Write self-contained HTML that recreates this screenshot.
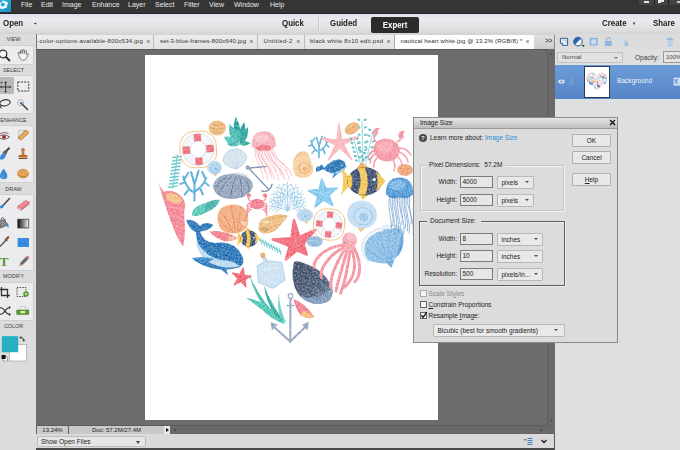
<!DOCTYPE html>
<html>
<head>
<meta charset="utf-8">
<title>Editor</title>
<style>
html,body{margin:0;padding:0;}
body{width:680px;height:450px;overflow:hidden;background:#dedede;font-family:"Liberation Sans","DejaVu Sans",sans-serif;position:relative;}
.abs{position:absolute;}
#menubar{left:0;top:0;width:680px;height:14px;background:#353535;box-shadow:inset 0 -0.5px 0 #111;}
#menubar span{position:absolute;top:0;line-height:9px;font-size:7px;color:#e8e8e8;white-space:nowrap;}
#logo{left:0;top:0;width:11px;height:11.5px;background:#1e9ac8;}
#modebar{left:0;top:14px;width:680px;height:21px;background:linear-gradient(#dde1ec 0%,#e9eaf0 25%,#e4e4e6 60%,#d2d2d3 100%);}
#modebar span{position:absolute;font-weight:bold;font-size:9px;color:#222;line-height:20px;top:-0.6px;white-space:nowrap;transform:scaleX(0.875);transform-origin:0 50%;}
#expert{left:370.5px;top:16.6px;width:48.3px;height:16.4px;background:#2b2b2b;border-radius:2px;color:#fff;font-weight:bold;font-size:9px;line-height:16px;text-align:center;}
#tools{left:0;top:34px;width:36px;height:416px;background:#dcdcdc;}
.tl{position:absolute;left:0;width:27px;height:11px;line-height:11px;font-size:5.4px;color:#3c3c3c;text-align:center;white-space:nowrap;}
.tg{position:absolute;left:0;width:33px;background:#ececee;border:1px solid #d0d0d0;border-left:none;}
#tabbar{left:36px;top:35px;width:519px;height:14px;background:linear-gradient(#ececec,#e2e2e2);}
.tab{position:absolute;top:0;height:14px;line-height:12px;font-size:6px;color:#333;white-space:nowrap;border-right:1px solid #bbb;}
#canvas{left:36px;top:49px;width:519px;height:385px;background:#6c6c6c;}
#doc{left:145px;top:55px;width:293px;height:365px;background:#fff;overflow:hidden;}
#status{left:36px;top:423px;width:519px;height:10px;background:#6b6b6b;}
#bottom{left:36px;top:433px;width:519px;height:17px;background:#d8d8d8;}
#right{left:555px;top:34px;width:125px;height:416px;background:#dedfe0;}
#dialog{left:413px;top:117px;width:203px;height:224px;background:#dcdcdc;border:1px solid #8a8a8a;}
.dt{position:absolute;font-size:6.5px;color:#222;white-space:nowrap;line-height:10px;}
.inp{position:absolute;width:29px;height:10px;border:1px solid #7c7c7c;background:#e6e6e6;font-size:6.5px;line-height:10px;color:#222;padding-left:2px;}
.sel{position:absolute;height:11px;border:1px solid #b8b8b8;background:#e9e9e9;font-size:6.5px;line-height:11px;color:#222;padding-left:4px;border-radius:1px;}
.sel i{position:absolute;right:4px;top:4.2px;width:0;height:0;border-left:2.7px solid transparent;border-right:2.7px solid transparent;border-top:2.8px solid #4c4c4c;}
.btn{position:absolute;margin-left:-1.3px;width:36.6px;height:11px;border:1px solid #b0b0b0;background:#e8e8e8;font-size:6.5px;line-height:11px;text-align:center;color:#222;border-radius:1px;}
.cb{position:absolute;width:5px;height:5px;border:1px solid #666;background:#f4f4f4;}
</style>
</head>
<body>
<div id="menubar" class="abs">
<div id="logo" class="abs" style="overflow:hidden;background:linear-gradient(135deg,#2eaee0,#1592c0)"><svg class="abs" style="left:0;top:0" width="11" height="12" viewBox="0 0 11 12"><path d="M3.2 0.4 L8 2.6 L6.6 7.8 L1.2 9.2 L-2.4 5.4 Z" fill="#eef8fc"/><circle cx="2.8" cy="4.5" r="2.1" fill="#3cb4e0"/><circle cx="2.8" cy="4.5" r="1" fill="#1a9bc8"/></svg></div>
<span style="left:21px">File</span>
<span style="left:41px">Edit</span>
<span style="left:62px">Image</span>
<span style="left:92px">Enhance</span>
<span style="left:128px">Layer</span>
<span style="left:155px">Select</span>
<span style="left:184px">Filter</span>
<span style="left:209px">View</span>
<span style="left:234px">Window</span>
<span style="left:270px">Help</span>
<div class="abs" style="left:639px;top:0;width:41px;height:5px;background:#444;border-radius:0 0 0 2px;">
<div class="abs" style="left:15px;top:0;width:1px;height:5px;background:#1c1c1c"></div><div class="abs" style="left:29px;top:0;width:1px;height:5px;background:#1c1c1c"></div>
<div class="abs" style="left:5px;top:1px;width:5px;height:1.5px;background:#e6e6e6"></div>
<div class="abs" style="left:19px;top:0;width:3px;height:2.5px;background:#e6e6e6"></div><div class="abs" style="left:22px;top:0;width:3px;height:1.5px;border:0.5px solid #e6e6e6;box-sizing:border-box"></div>
<div class="abs" style="left:38px;top:1px;width:3px;height:1.5px;background:#c8c8c8"></div>
</div>
</div>
<div id="modebar" class="abs">
<span style="left:3px">Open</span>
<span style="left:34px">-</span>
<span style="left:282px">Quick</span>
<span style="left:330px">Guided</span>
<div class="abs" style="left:318px;top:3px;width:1px;height:14px;background:#c4c4c8;box-shadow:1px 0 0 #f2f2f4;"></div>
<span style="left:602px">Create</span>
<span style="left:632.5px;font-size:5px">▾</span>
<span style="left:653px">Share</span>
</div>
<div id="expert" class="abs"><span style="display:inline-block;transform:scaleX(0.875);">Expert</span></div>
<div id="tabbar" class="abs">
<div class="tab" style="left:1.3px;width:115.7px;letter-spacing:0.25px">-color-options-available-800x534.jpg &nbsp;x</div>
<div class="tab" style="left:118px;width:97px;padding-left:6px;letter-spacing:0.155px">set-3-blue-frames-800x640.jpg &nbsp;x</div>
<div class="tab" style="left:222px;width:40px;padding-left:5.5px;letter-spacing:0.35px">Untitled-2 &nbsp;x</div>
<div class="tab" style="left:268px;width:83.5px;padding-left:6px;letter-spacing:0.25px">black white 8x10 edit.psd &nbsp;x</div>
<div class="tab" style="left:358px;width:133.5px;padding-left:5.6px;background:#fdfdfd;letter-spacing:0.15px;border-left:1px solid #aaa;border-right:1px solid #aaa;">nautical heart white.jpg @ 13.2% (RGB/8) * &nbsp;x</div>
<div class="tab" style="left:498px;width:20px;border:none;background:linear-gradient(#e0e0e0,#cccccc);"></div><div class="tab" style="left:508.5px;border:none;font-size:7.5px;letter-spacing:-0.6px;color:#555;font-weight:bold;transform:scaleX(0.9);transform-origin:0 50%">&gt;&gt;</div>
</div>
<div class="abs" style="left:36px;top:34px;width:1px;height:416px;background:#7a7a7a;"></div>
<div id="canvas" class="abs"></div>
<div class="abs" style="left:547px;top:49px;width:8px;height:385px;background:#696969;border-left:1px solid #5c5c5c;box-sizing:border-box;"></div>
<div class="abs" style="left:549px;top:52px;font-size:4px;color:#444;line-height:4px;">▲</div>
<div class="abs" style="left:549px;top:419px;font-size:4px;color:#444;line-height:4px;">▼</div>
<div id="doc" class="abs">
<!--HS--><svg class="abs" style="left:0;top:0" width="293" height="365" viewBox="145 55 293 365">
<defs><filter id="bl" x="-2%" y="-2%" width="104%" height="104%"><feGaussianBlur stdDeviation="0.4" result="b"/><feTurbulence type="fractalNoise" baseFrequency="0.55" numOctaves="2" seed="4" result="n"/><feColorMatrix in="n" type="matrix" values="0 0 0 0 0  0 0 0 0 0  0 0 0 0 0  0.9 0 0 0 0.42" result="a"/><feComposite in="b" in2="a" operator="in"/></filter><linearGradient id="mg" x1="0.1" y1="0" x2="0.9" y2="1"><stop offset="0" stop-color="#36465f"/><stop offset="0.55" stop-color="#44566f"/><stop offset="1" stop-color="#6f8cae"/></linearGradient></defs>
<g id="hg" filter="url(#bl)">
<path d="M177.5 154 Q175.5 172 172.5 189" stroke="#4cb4be" stroke-width="0.9" fill="none"/><path d="M173.0 157.6 L181.4 156.4 M172.6 160.9 L180.9 159.7 M172.1 164.2 L180.5 163.0 M171.7 167.5 L180.0 166.3 M171.2 170.8 L179.6 169.6 M170.8 174.1 L179.1 172.9 M170.3 177.4 L178.7 176.2 M169.8 180.7 L178.2 179.5 M169.4 184.0 L177.8 182.8 M168.9 187.3 L177.3 186.1" stroke="#5cc2ca" stroke-width="1.5" fill="none" stroke-linecap="round"/>
<g><rect x="180.0" y="131.2" width="36.4" height="36.4" rx="14.6" fill="none" stroke="#f0b46a" stroke-width="0.9" transform="rotate(-4 198.2 149.4)"/>
<circle cx="198.2" cy="149.4" r="12.00" fill="none" stroke="#f4f5f9" stroke-width="8.00"/>
<rect x="194.52" y="133.65" width="7.36" height="7.60" rx="0.6" fill="#f06472" transform="rotate(-4 198.2 149.4)"/><rect x="194.52" y="133.65" width="7.36" height="7.60" rx="0.6" fill="#f06472" transform="rotate(86 198.2 149.4)"/><rect x="194.52" y="133.65" width="7.36" height="7.60" rx="0.6" fill="#f06472" transform="rotate(176 198.2 149.4)"/><rect x="194.52" y="133.65" width="7.36" height="7.60" rx="0.6" fill="#f06472" transform="rotate(266 198.2 149.4)"/>
<circle cx="198.2" cy="149.4" r="16" fill="none" stroke="#c4c8d4" stroke-width="0.6"/><circle cx="198.2" cy="149.4" r="8.0" fill="none" stroke="#c4c8d4" stroke-width="0.6"/></g>
<ellipse cx="217.3" cy="128" rx="8.7" ry="7.4" fill="#ebb878"/><path d="M212 124q5 3 11 0M211 128q6 3 13 0M213 132q4 2 9 0" stroke="#c98a48" stroke-width="0.6" fill="none"/>
<path d="M238.4 144.2 Q244.0 131.1 235.6 116.5 Q230.4 132.4 238.4 144.2Z" fill="#1f9c94"/><path d="M240.5 144.2 Q248.3 135.3 244.2 122.1 Q236.0 133.2 240.5 144.2Z" fill="#1f9c94"/><path d="M242.0 144.2 Q249.6 138.2 247.8 127.1 Q239.6 134.8 242.0 144.2Z" fill="#23a29a"/><path d="M236.9 144.2 Q240.3 132.7 229.6 124.0 Q226.9 137.5 236.9 144.2Z" fill="#3fbab0"/><path d="M236.9 144.5 Q234.6 135.2 224.0 136.7 Q227.5 146.9 236.9 144.5Z" fill="#4cc4b8"/><path d="M239.2 145.1 Q234.0 140.6 226.8 143.9 Q233.2 148.6 239.2 145.1Z" fill="#38b0a6"/><path d="M238.4 143.9 Q244.4 147.8 251.0 143.0 Q243.8 139.1 238.4 143.9Z" fill="#2aa69c"/><path d="M238.0 144.2 Q243.2 137.2 238.4 128.4 Q233.2 136.9 238.0 144.2Z" fill="#37b2a8"/>
<path d="M251.8 146.335 Q251.20000000000002 131.3 263.8 131.3 Q276.40000000000003 131.3 275.8 146.335 Q269.8 151.67 263.8 148.76 Q257.8 151.67 251.8 146.335Z" fill="#f5aab3"/><ellipse cx="262.0" cy="138.09" rx="7.199999999999999" ry="4.365" fill="#fad4d8" opacity="0.55"/><path d="M254.8 146.8 q-0.6 9.7 4.2 17.8 t4.2 14.6 M256.2 146.8 q-0.6 7.9 4.6 14.4 t4.6 11.8 M257.6 146.8 q-0.5 10.2 5.0 18.7 t5.0 15.3 M259.0 146.8 q-0.4 8.4 5.4 15.4 t5.4 12.6 M260.3 146.8 q-0.3 9.4 5.8 17.2 t5.8 14.1 M261.7 146.8 q-0.3 9.8 6.2 18.0 t6.2 14.7 M263.1 146.8 q-0.2 7.6 6.6 14.0 t6.6 11.5 M264.5 146.8 q-0.1 10.2 7.0 18.6 t7.0 15.2 M265.9 146.8 q-0.0 8.6 7.4 15.7 t7.4 12.9 M267.3 146.8 q0.1 9.2 7.8 16.9 t7.8 13.8 M268.6 146.8 q0.1 9.9 8.2 18.2 t8.2 14.9 M270.0 146.8 q0.2 7.4 8.6 13.6 t8.6 11.1 M271.4 146.8 q0.3 10.1 9.0 18.5 t9.0 15.2 M272.8 146.8 q0.4 8.8 9.4 16.1 t9.4 13.2" stroke="#ee6f7e" stroke-width="0.6" fill="none" opacity="0.7"/>
<path d="M256 148 Q264 141 272 148 Q270 152 264 150.5 Q258 152 256 148Z" fill="#f0687a" opacity="0.85"/>
<g transform="rotate(-10 235 159.3)"><path d="M235 169.3 Q219.4 162.3 224.2 155.3 Q229.0 148.3 235 149.3 Q241.0 148.3 245.8 155.3 Q250.6 162.3 235 169.3Z" fill="#d6e4f0" stroke="#a9c3d9" stroke-width="0.8"/><path d="M235 168.3 L225.1 155.3 M235 168.3 L227.7 152.6 M235 168.3 L231.1 150.9 M235 168.3 L235.0 150.3 M235 168.3 L238.9 150.9 M235 168.3 L242.3 152.6 M235 168.3 L244.9 155.3" stroke="#a9c3d9" stroke-width="0.5" opacity="0.6" fill="none"/></g>
<g transform="rotate(5 214.5 167.6)"><path d="M210.0 169.7 L216.0 176.35 L219.0 171.79999999999998Z" fill="#eebc66"/><ellipse cx="214.5" cy="167.6" rx="7.5" ry="7" fill="#b9d8ee"/><ellipse cx="215.25" cy="168.29999999999998" rx="4.65" ry="4.34" fill="none" stroke="#7fb3d8" stroke-width="0.9"/><ellipse cx="215.625" cy="168.65" rx="2.1" ry="1.9600000000000002" fill="#7fb3d8" opacity="0.8"/></g>
<path d="M213 186 Q216 173 234 174 Q252 175 253 186 Q250 198 233 199 Q215 199 213 186Z" fill="#8d9fb8"/><path d="M232 176 Q222 184 219 195M236 176 Q232 186 230 198M240 177 Q242 187 242 197M245 179 Q250 186 249 192M227 177Q217 182 215 190" stroke="#5f7290" stroke-width="1" fill="none"/><path d="M230 174 Q240 172 247 176" stroke="#c0ccdc" stroke-width="1.2" fill="none"/>
<g stroke="#7489a8" stroke-width="1.4" fill="none" stroke-linecap="round"><path d="M248.8 168.3 L268 188.6"/><path d="M246.5 168.3 L266 166.6"/><path d="M261.5 191 Q269.5 193 272 184.5"/><circle cx="247.6" cy="167.6" r="1.3"/></g>
<path d="M194.5 200.5 L194.5 182.5 M194.5 193.0 Q186.1 188.5 183.3 176.5 M194.5 191.5 Q202.9 187.0 206.26 178.0 M194.5 184.0 L191.14 172.0 M194.5 184.0 L198.7 170.5 M184.42 182.5 L180.5 184.0 M183.86 179.5 L188.34 172.9 M205.14 182.5 L208.5 185.5 M205.7 179.5 L202.34 172.0 M200.1 188.5 L202.9 194.5 M188.9 189.4 L184.7 194.5" stroke="#4fa8d8" stroke-width="2.1" stroke-linecap="round" fill="none"/>
<path d="M158.5 182.8 Q160.4 188.5 164.2 191.7 Q168.0 189.8 172.7 191.3 Q183.1 194.2 185.3 204.6 Q183.3 212.1 184.4 218.8 Q185.9 232.9 183.3 246.5 Q178.4 240.5 174.6 231.0 Q166.1 210.2 158.5 182.8Z" fill="#f27c8c"/><ellipse cx="173.6" cy="198.3" rx="8.5" ry="4.6" fill="#f3bd80" transform="rotate(22 173.6 198.3)"/><path d="M166.1 206.5 Q174.6 206.5 184.6 211.2 M168.9 215.9 Q176.5 215.9 184.2 220.6 M172.3 225.4 Q178.4 225.4 184.8 229.5 M176.1 234.8 Q180.2 234.8 184.2 237.7" stroke="#f7a5b0" stroke-width="1" fill="none"/>
<path d="M192.0 215.0 Q192.5 206.5 204.8 203.6 Q212.4 198.9 219.9 199.8 Q217.1 208.4 206.7 212.1 Q197.3 217.8 192.0 215.0Z" fill="#3caea4"/><path d="M192.0 215.0 Q192.5 206.5 204.8 203.6 Q206.7 208.4 203.9 213.1 Q197.3 217.4 192.0 215.0Z" fill="#4fc8b0"/>
<path d="M287.5 210.8 Q283.1 208.2 268.8 205.5 M281.5 208.4 L276.9 210.6 M276.9 210.6 l-1.5 2.0 M281.5 208.4 L278.6 204.3 M278.6 204.3 l-0.3 -2.5 M278.2 207.5 L274.1 209.5 M274.1 209.5 l-1.3 1.8 M278.2 207.5 L275.6 203.8 M275.6 203.8 l-0.2 -2.3 M274.1 206.6 L270.4 208.3 M270.4 208.3 l-1.2 1.6 M274.1 206.6 L271.8 203.3 M271.8 203.3 l-0.2 -2.0 M287.5 210.8 Q283.3 204.5 269.7 198.3 M281.8 205.2 L276.8 205.7 M276.8 205.7 l-2.1 1.4 M281.8 205.2 L280.4 200.3 M280.4 200.3 l0.5 -2.5 M278.7 203.0 L274.1 203.5 M274.1 203.5 l-1.9 1.3 M278.7 203.0 L277.4 198.7 M277.4 198.7 l0.5 -2.2 M274.7 200.8 L270.7 201.2 M270.7 201.2 l-1.7 1.2 M274.7 200.8 L273.6 196.9 M273.6 196.9 l0.4 -2.0 M287.5 210.8 Q284.0 200.7 272.8 190.6 M282.8 201.7 L277.9 200.6 M277.9 200.6 l-2.4 0.7 M282.8 201.7 L283.0 196.7 M283.0 196.7 l1.3 -2.2 M280.2 198.3 L275.8 197.3 M275.8 197.3 l-2.2 0.6 M280.2 198.3 L280.4 193.7 M280.4 193.7 l1.2 -1.9 M277.0 194.6 L273.0 193.8 M273.0 193.8 l-1.9 0.6 M277.0 194.6 L277.1 190.6 M277.1 190.6 l1.0 -1.7 M287.5 210.8 Q285.5 197.6 279.0 184.4 M284.8 198.9 L280.5 196.3 M280.5 196.3 l-2.5 -0.1 M284.8 198.9 L286.6 194.2 M286.6 194.2 l1.9 -1.6 M283.3 194.4 L279.4 192.1 M279.4 192.1 l-2.3 -0.1 M283.3 194.4 L284.9 190.2 M284.9 190.2 l1.7 -1.5 M281.4 189.7 L278.0 187.6 M278.0 187.6 l-2.0 -0.1 M281.4 189.7 L282.9 185.9 M282.9 185.9 l1.5 -1.3 M287.5 210.8 Q287.5 196.4 287.5 182.0 M287.5 197.8 L284.3 194.0 M284.3 194.0 l-2.3 -0.9 M287.5 197.8 L290.7 194.0 M290.7 194.0 l2.3 -0.9 M287.5 192.9 L284.6 189.5 M284.6 189.5 l-2.1 -0.8 M287.5 192.9 L290.4 189.5 M290.4 189.5 l2.1 -0.8 M287.5 187.8 L284.9 184.7 M284.9 184.7 l-1.9 -0.7 M287.5 187.8 L290.1 184.7 M290.1 184.7 l1.9 -0.7 M287.5 210.8 Q289.5 197.6 296.0 184.4 M290.2 198.9 L288.4 194.2 M288.4 194.2 l-1.9 -1.6 M290.2 198.9 L294.5 196.3 M294.5 196.3 l2.5 -0.1 M291.7 194.4 L290.1 190.2 M290.1 190.2 l-1.7 -1.5 M291.7 194.4 L295.6 192.1 M295.6 192.1 l2.3 -0.1 M293.6 189.7 L292.1 185.9 M292.1 185.9 l-1.5 -1.3 M293.6 189.7 L297.0 187.6 M297.0 187.6 l2.0 -0.1 M287.5 210.8 Q291.0 200.7 302.2 190.6 M292.2 201.7 L292.0 196.7 M292.0 196.7 l-1.3 -2.2 M292.2 201.7 L297.1 200.6 M297.1 200.6 l2.4 0.7 M294.8 198.3 L294.6 193.7 M294.6 193.7 l-1.2 -1.9 M294.8 198.3 L299.2 197.3 M299.2 197.3 l2.2 0.6 M298.0 194.6 L297.9 190.6 M297.9 190.6 l-1.0 -1.7 M298.0 194.6 L302.0 193.8 M302.0 193.8 l1.9 0.6 M287.5 210.8 Q291.7 204.5 305.3 198.3 M293.2 205.2 L294.6 200.3 M294.6 200.3 l-0.5 -2.5 M293.2 205.2 L298.2 205.7 M298.2 205.7 l2.1 1.4 M296.3 203.0 L297.6 198.7 M297.6 198.7 l-0.5 -2.2 M296.3 203.0 L300.9 203.5 M300.9 203.5 l1.9 1.3 M300.3 200.8 L301.4 196.9 M301.4 196.9 l-0.4 -2.0 M300.3 200.8 L304.3 201.2 M304.3 201.2 l1.7 1.2 M287.5 210.8 Q291.9 208.2 306.2 205.5 M293.5 208.4 L296.4 204.3 M296.4 204.3 l0.3 -2.5 M293.5 208.4 L298.1 210.6 M298.1 210.6 l1.5 2.0 M296.8 207.5 L299.4 203.8 M299.4 203.8 l0.2 -2.3 M296.8 207.5 L300.9 209.5 M300.9 209.5 l1.3 1.8 M300.9 206.6 L303.2 203.3 M303.2 203.3 l0.2 -2.0 M300.9 206.6 L304.6 208.3 M304.6 208.3 l1.2 1.6" stroke="#78b9df" stroke-width="0.65" fill="none" opacity="0.9" stroke-linecap="round"/>
<ellipse cx="257" cy="204" rx="7.0" ry="5.2" fill="#f27688"/><path d="M251.5 203.2 q-4.0 -0.8 -4.5 3.6 M251.5 205.2 q-4.0 0.0 -4.5 4.6 M251.5 207.2 q-4.0 0.8 -4.5 5.5 M251.5 209.2 q-4.0 1.6 -4.5 6.5 M252.0 201.6 q-5.0 -1.6 -3.5 -6.0 M262.5 203.2 q4.0 -0.8 4.5 3.6 M262.5 205.2 q4.0 0.0 4.5 4.6 M262.5 207.2 q4.0 0.8 4.5 5.5 M262.5 209.2 q4.0 1.6 4.5 6.5 M262.0 201.6 q5.0 -1.6 3.5 -6.0" stroke="#f27688" stroke-width="1.1" fill="none" stroke-linecap="round"/><ellipse cx="249.0" cy="195.6" rx="2.0" ry="2.2" fill="#f27688" transform="rotate(30 249.0 195.6)"/><ellipse cx="265.0" cy="195.6" rx="2.0" ry="2.2" fill="#f27688" transform="rotate(-30 265.0 195.6)"/>
<g transform="translate(0 1.6)"><path d="M217.5 217 Q217 204 232 203 Q247 203 248 215 Q250 227 240 231 Q228 234 221 228 Q217.5 223 217.5 217Z" fill="#f2a878"/><path d="M233 231 Q228 218 221 210M235 231 Q234 216 231 204M237 230 Q240 216 241 205M239 230Q245 220 247.5 213M231 231Q224 224 219 218" stroke="#df7a4e" stroke-width="1" fill="none" opacity="0.85"/><path d="M240 221 q4 -3 8 1 q-3 4 -8 -1z" fill="#f7c9a6"/></g>
<path d="M258.5 228 Q258 218 270 216 Q280 212.5 288 216 Q284 221 280 226 Q274 234 264 233.5 Q258.5 233 258.5 228Z" fill="#edbb7c"/><path d="M260 224 Q272 217 287 216M262 231Q274 226 281 224" stroke="#c98d4e" stroke-width="0.6" fill="none"/><path d="M259 228.5 q6 -3 11 1.5 q-5 4 -11 -1.5z" fill="#cf9a5e"/><ellipse cx="266" cy="222" rx="3" ry="1.5" fill="#f7dcae"/>
<path d="M186 220 Q194 218.5 200 226 Q205 220.5 213.5 225 Q208 231.5 200 231.5 Q203 242 215 243 Q236 240 243 258 Q245 266 237 268 Q220 272 205 266 Q195 262 192 258 Q203 258 206 256 Q196 246 196 232 Q190 230 187 222Z" fill="#1e6db3"/>
<path d="M196 240 Q197 256 212 264 Q226 270 240 266 Q232 260 222 260 Q206 258 196 240Z" fill="#b5d7f0"/>
<path d="M192 258 Q204 256 214 259 Q206 264 200 263Z" fill="#2a7fc2"/><path d="M219 268 L228 275 L226 268Z" fill="#1e6db3"/><circle cx="227" cy="256" r="1.1" fill="#0d2a48"/>
<path d="M209.5 231.5 Q222 229 238 238 Q232 242 224 241 Q215 238.5 209.5 231.5Z" fill="#f27484"/><path d="M229 236 Q234 237 238 238 Q233 241.5 228 241Z" fill="#f5b89a"/>
<g transform="translate(248.7 238.6) scale(1 1)"><path d="M-5.5 0 L-11.66 -7.905 Q-9.68 0 -11.66 7.905Z" fill="#f5c24c"/><path d="M-4.4 -6.51 L-1.3199999999999998 -11.16 L2.75 -7.440000000000001Z" fill="#f0a94a"/><path d="M-3.3 6.51 L-0.55 10.695 L3.3 6.9750000000000005Z" fill="#f5c24c"/><ellipse cx="0.32999999999999996" cy="0" rx="8.8" ry="8.184000000000001" fill="#35486a"/><path d="M-3.3 -7.440000000000001 Q-0.22 -1.8600000000000003 -3.08 7.440000000000001 L0.6599999999999999 7.998 Q3.3 0.9300000000000002 0.44 -8.184000000000001Z" fill="#f5c24c"/><path d="M6.050000000000001 -5.766 Q7.92 0 6.050000000000001 5.766 Q9.35 2.79 11.0 0 Q9.35 -2.79 6.050000000000001 -5.766Z" fill="#f5c24c"/><path d="M-6.82 -4.65 Q-4.95 0 -6.82 4.65 L-8.25 2.325 L-8.25 -2.325Z" fill="#f5c24c"/><circle cx="5.279999999999999" cy="-1.116" r="0.8" fill="#fff"/></g>
<path d="M259.5 240 L281.5 251.8 M260.2 238.4 L261.8 244.2 M262.9 239.8 L264.5 245.6 M265.6 241.3 L267.2 247.1 M268.3 242.8 L269.9 248.5 M271.0 244.2 L272.6 250.0 M273.7 245.7 L275.3 251.4 M276.4 247.1 L278.0 252.9 M279.1 248.6 L280.7 254.3" stroke="#55c0c6" stroke-width="1" fill="none" stroke-linecap="round"/>
<polygon points="243.3,267.5 244.4,275.0 251.9,276.3 245.0,279.7 246.1,287.2 240.8,281.7 233.9,285.1 237.5,278.4 232.2,272.9 239.7,274.2" fill="#f05a6b" stroke="#f05a6b" stroke-width="1" stroke-linejoin="round"/>
<path d="M257 266 L266 260.5 L282 262.5 L285 280 L273 288.5 L258.5 282.5Z" fill="#c8e0f2" stroke="#9cc2de" stroke-width="0.8" stroke-linejoin="round"/><path d="M262 258 L266 257 L268 262 L264 263Z" fill="#b5d3ea"/><rect x="260.5" y="253" width="4.5" height="5" fill="#e6a35e" transform="rotate(-15 262 255)"/><path d="M263 270 L278 268 M262 277 L274 283" stroke="#e6f1fa" stroke-width="0.8"/>
<path d="M285 324 Q262 304 249 274 Q255 298 270 314 Q278 322 285 324Z" fill="#3cb9a8"/><path d="M285 324 Q266 300 246 298 Q258 306 268 315 Q277 322 285 324Z" fill="#45c2b0"/><path d="M285 322 Q272 306 264 285.5 Q266 304 276 316 Q281 321 285 322Z" fill="#2fa99b"/><path d="M286.5 323 Q279 308 279 293 Q276 308 281 318 Q284 322 286.5 323Z" fill="#5fcfbe"/>
<polygon points="293.9,219.7 299.3,236.8 315.2,230.1 303.5,244.1 306.7,254.7 296.9,250.5 285.9,259.4 289.7,246.2 272.7,239.5 291.4,238.1" fill="#f1606f" stroke="#f1606f" stroke-width="2.4" stroke-linejoin="round"/><path d="M296.3 243.3 L293.9 219.7 M296.3 243.3 L315.2 230.1 M296.3 243.3 L306.7 254.7 M296.3 243.3 L285.9 259.4 M296.3 243.3 L272.7 239.5" stroke="#f9b0b8" stroke-width="0.7" stroke-dasharray="0.8 1.3"/>
<g stroke="#8aa0bc" stroke-width="2" fill="none" stroke-linecap="round" stroke-linejoin="round"><circle cx="290.5" cy="296" r="2.3" stroke-width="1.3"/><path d="M290.5 299 L290.2 342"/><path d="M287.3 305.4 L293.6 305.4" stroke-width="1.5"/><path d="M273.5 326.5 L290.2 341.5 L305.8 326.5"/></g><path d="M270.5 322 L277.5 324.5 L272 330.5Z M309 322 L302 324.5 L307.5 330.5Z" fill="#8aa0bc"/>
<path d="M294 262 Q289.5 280 298 294 Q310 308 327 302 Q334.5 298 332 287 Q324 270 306 264 Q298 260 294 262Z" fill="url(#mg)"/><path d="M296 272 Q302 292 322 299M300 268 Q310 286 329 293M306 267 Q318 278 331.5 288" stroke="#2f3d58" stroke-width="0.9" fill="none"/><path d="M300 296 Q312 308 327 302 Q334.5 298 332 287 Q328 292 322 295 Q310 300 300 296Z" fill="#7794b6"/>
<path d="M293.5 299 Q304 302 314.5 317 Q306 320 300.5 315 Q295 308 293.5 299Z" fill="#f27a8b"/><path d="M300.5 315 Q306 320 314.5 317 Q309 312.5 303 311Z" fill="#f4bd6a"/>
<g stroke="#f58d9b" stroke-width="2.9" fill="none" stroke-linecap="round"><path d="M344.4 244.8 C320.8 247.7 313.2 261.9 314.2 267.5"/><path d="M343.5 247.3 C328.4 256.2 319.8 267.5 321.2 277.9"/><path d="M345.0 249.2 C335.9 262.8 329.3 278.9 331.2 287.4"/><path d="M347.3 250.1 C342.5 266.6 337.8 281.7 335.9 291.2"/><path d="M350.1 250.5 C347.6 268.5 345.4 281.7 340.6 293.1"/><path d="M352.0 249.6 C355.8 262.8 356.7 276.0 344.4 287.4"/><path d="M353.9 247.3 C360.9 260.9 362.0 274.5 354.8 281.7"/></g><ellipse cx="349.5" cy="240.3" rx="7.4" ry="7.8" fill="#f7a0ab"/><ellipse cx="349" cy="248" rx="6" ry="3.5" fill="#f7a0ab"/><ellipse cx="351" cy="237" rx="4" ry="4" fill="#fbc5cc" opacity="0.7"/><circle cx="344.5" cy="243" r="0.8" fill="#555"/>
<path d="M368.4 260.9 Q361.4 253.4 362.9 245.4 Q364.3 236.7 372.2 232.6 Q376.0 228.4 380.9 229.5 Q385.1 225.0 390.7 226.9 Q396.4 224.6 402.5 229.2" stroke="#eaf0f6" stroke-width="2.6" fill="none" stroke-linecap="round"/><path d="M368.4 260.9 Q361.4 253.4 362.9 245.4 Q364.3 236.7 372.2 232.6 Q376.0 228.4 380.9 229.5 Q385.1 225.0 390.7 226.9 Q396.4 224.6 402.5 229.2" stroke="#b6c8da" stroke-width="0.5" fill="none" transform="translate(-0.9 -0.9)"/><path d="M388.8 263.4 Q375.6 263.8 368.1 260.0 Q363.3 253.4 364.7 245.8 Q366.2 238.2 373.3 234.5 Q376.6 230.7 381.3 231.6 Q385.1 227.3 390.4 229.2 Q396.4 226.5 402.1 229.7 Q404.3 238.2 403.0 244.8 Q401.1 253.4 396.0 257.5 Q392.6 261.9 388.8 263.4Z" fill="#86bbe6"/><path d="M388.8 262.8 Q375.6 257.1 366.2 247.7 M388.8 262.8 Q377.5 249.6 370.3 238.2 M388.8 262.8 Q382.2 245.8 379.4 232.9 M388.8 262.8 Q387.9 243.9 388.8 230.3 M388.8 262.8 Q393.6 245.8 398.3 230.3 M388.8 262.8 Q395.5 251.5 402.1 240.1" stroke="#5c9bd2" stroke-width="0.8" fill="none" opacity="0.75"/><path d="M396.0 257.5 Q401.1 253.4 403.0 244.8 Q404.0 238.2 402.3 230.7 Q400.2 242.0 396.0 257.5Z" fill="#5a98d4"/><path d="M386.0 261.9 L391.1 268.1 L394.5 260.0Z" fill="#6aa4d8"/>
<g><rect x="313.6" y="209.0" width="31.0" height="31.0" rx="12.4" fill="none" stroke="#f0b46a" stroke-width="0.9" transform="rotate(6 329.1 224.5)"/>
<circle cx="329.1" cy="224.5" r="9.98" fill="none" stroke="#f4f5f9" stroke-width="6.65"/>
<rect x="326.04" y="211.45" width="6.12" height="6.25" rx="0.6" fill="#f06472" transform="rotate(6 329.1 224.5)"/><rect x="326.04" y="211.45" width="6.12" height="6.25" rx="0.6" fill="#f06472" transform="rotate(96 329.1 224.5)"/><rect x="326.04" y="211.45" width="6.12" height="6.25" rx="0.6" fill="#f06472" transform="rotate(186 329.1 224.5)"/><rect x="326.04" y="211.45" width="6.12" height="6.25" rx="0.6" fill="#f06472" transform="rotate(276 329.1 224.5)"/>
<circle cx="329.1" cy="224.5" r="13.3" fill="none" stroke="#c4c8d4" stroke-width="0.6"/><circle cx="329.1" cy="224.5" r="6.65" fill="none" stroke="#c4c8d4" stroke-width="0.6"/></g>
<ellipse cx="314.7" cy="241.5" rx="8" ry="5.6" fill="#93bbdc"/><path d="M308 240 q6 -3 12 0M309 243.5 q5 2 11 0" stroke="#6f9cc4" stroke-width="0.6" fill="none"/>
<g transform="rotate(15 362 214.5)"><path d="M353.0 218.7 L365.0 232.0 L371.0 222.9Z" fill="#f0b860"/><ellipse cx="362" cy="214.5" rx="15" ry="14" fill="#c0dcf2"/><ellipse cx="363.5" cy="215.9" rx="9.3" ry="8.68" fill="none" stroke="#8bbde2" stroke-width="0.9"/><ellipse cx="364.25" cy="216.6" rx="4.2" ry="3.9200000000000004" fill="#8bbde2" opacity="0.8"/></g>
<g transform="rotate(0 304.8 215.2)"><path d="M299.82 217.23999999999998 L306.46000000000004 223.7 L309.78000000000003 219.28Z" fill="#e9b86a"/><ellipse cx="304.8" cy="215.2" rx="8.3" ry="6.8" fill="#bcd9ee"/><ellipse cx="305.63" cy="215.88" rx="5.146000000000001" ry="4.216" fill="none" stroke="#86b8dc" stroke-width="0.9"/><ellipse cx="306.045" cy="216.22" rx="2.3240000000000003" ry="1.9040000000000001" fill="#86b8dc" opacity="0.8"/></g>
<polygon points="321.7,179.1 326.1,188.9 336.8,188.1 328.8,195.3 332.8,205.3 323.5,200.0 315.3,206.9 317.5,196.3 308.4,190.6 319.1,189.5" fill="#74c2ea" stroke="#74c2ea" stroke-width="1.6" stroke-linejoin="round"/>
<path d="M323 194 L322 180 M323 194 L337 189 M323 194 L332 206 M323 194 L314 206 M323 194 L309 190" stroke="#a8dcf4" stroke-width="0.8"/>
<path d="M293 166 Q293 152 304 151 Q310 152 311 162 Q316 170 310 176 Q302 180 296 176 Q293 172 293 166Z" fill="#f5cd9a"/><circle cx="304.5" cy="168" r="5.5" fill="none" stroke="#e9a365" stroke-width="1.2"/><circle cx="305" cy="169" r="2.2" fill="#e9a365"/><path d="M295 160 Q298 153 305 152.5" stroke="#e9b070" stroke-width="0.8" fill="none"/><path d="M296 160 Q302 156 309 158" stroke="#f8dcb4" stroke-width="0.8" fill="none"/>
<path d="M319 157.5 L319 144.9 M319 152.25 Q313.0 149.1 311.0 140.7 M319 151.2 Q325.0 148.05 327.4 141.75 M319 145.95 L316.6 137.55 M319 145.95 L322.0 136.5 M311.8 144.9 L309.0 145.95 M311.4 142.8 L314.6 138.18 M326.6 144.9 L329.0 147.0 M327.0 142.8 L324.6 137.55 M323.0 149.1 L325.0 153.3 M315.0 149.73 L312.0 153.3" stroke="#4faad9" stroke-width="1.6" stroke-linecap="round" fill="none"/>
<polygon points="338.8,123.5 341.9,139.9 358.3,136.7 343.6,144.7 351.8,159.3 339.7,147.8 328.3,160.1 335.5,145.0 320.3,138.0 336.9,140.1" fill="#f9b0b8" stroke="#f9b0b8" stroke-width="1.2" stroke-linejoin="round"/>
<ellipse cx="352" cy="128.5" rx="8" ry="5.5" fill="#ecb273" transform="rotate(-30 352 128.5)"/><path d="M347 131 q5 -2 9 -7" stroke="#c98d4e" stroke-width="0.6" fill="none"/>
<path d="M323.9 169.0 L316.7 172.1 Q314.6 169.0 317.4 166.2 Q320.2 167.4 321.1 164.6 Q323.6 164.9 323.9 169.0Z" fill="#2273b5"/><path d="M323.0 169.0 Q330.4 160.6 339.1 159.3 Q344.7 160.0 346.1 166.2 Q345.2 171.2 336.7 173.6 Q328.6 173.6 323.0 169.0Z" fill="#1f6eb0"/><path d="M329.2 173.0 Q339.0 173.0 345.8 166.2 Q345.7 170.8 337.0 174.6 Q332.3 174.9 329.2 173.0Z" fill="#9ccff0"/><path d="M334.0 173.6 L332.3 178.6 L337.9 173.6Z" fill="#1f6eb0"/><circle cx="342.1" cy="165.2" r="0.7" fill="#fff"/>
<path d="M363 166 L362 121 M365 166 L373 131 M361 166 L354 140" stroke="#5cbcc0" stroke-width="0.7" fill="none" stroke-linecap="round"/><g fill="#56bcc0"><ellipse cx="359.6" cy="157.3" rx="1.7" ry="1.1" transform="rotate(25 359.6 157.3)"/><ellipse cx="366.0" cy="157.3" rx="1.7" ry="1.1" transform="rotate(-25 366.0 157.3)"/><ellipse cx="359.5" cy="149.8" rx="1.7" ry="1.1" transform="rotate(25 359.5 149.8)"/><ellipse cx="365.9" cy="149.8" rx="1.7" ry="1.1" transform="rotate(-25 365.9 149.8)"/><ellipse cx="359.3" cy="142.3" rx="1.7" ry="1.1" transform="rotate(25 359.3 142.3)"/><ellipse cx="365.7" cy="142.3" rx="1.7" ry="1.1" transform="rotate(-25 365.7 142.3)"/><ellipse cx="359.1" cy="134.8" rx="1.7" ry="1.1" transform="rotate(25 359.1 134.8)"/><ellipse cx="365.5" cy="134.8" rx="1.7" ry="1.1" transform="rotate(-25 365.5 134.8)"/><ellipse cx="359.0" cy="127.3" rx="1.7" ry="1.1" transform="rotate(25 359.0 127.3)"/><ellipse cx="365.4" cy="127.3" rx="1.7" ry="1.1" transform="rotate(-25 365.4 127.3)"/><ellipse cx="358.8" cy="119.8" rx="1.7" ry="1.1" transform="rotate(25 358.8 119.8)"/><ellipse cx="365.2" cy="119.8" rx="1.7" ry="1.1" transform="rotate(-25 365.2 119.8)"/><ellipse cx="363.1" cy="159.0" rx="1.7" ry="1.1" transform="rotate(25 363.1 159.0)"/><ellipse cx="369.5" cy="159.0" rx="1.7" ry="1.1" transform="rotate(-25 369.5 159.0)"/><ellipse cx="364.5" cy="153.1" rx="1.7" ry="1.1" transform="rotate(25 364.5 153.1)"/><ellipse cx="370.9" cy="153.1" rx="1.7" ry="1.1" transform="rotate(-25 370.9 153.1)"/><ellipse cx="365.8" cy="147.3" rx="1.7" ry="1.1" transform="rotate(25 365.8 147.3)"/><ellipse cx="372.2" cy="147.3" rx="1.7" ry="1.1" transform="rotate(-25 372.2 147.3)"/><ellipse cx="367.1" cy="141.5" rx="1.7" ry="1.1" transform="rotate(25 367.1 141.5)"/><ellipse cx="373.5" cy="141.5" rx="1.7" ry="1.1" transform="rotate(-25 373.5 141.5)"/><ellipse cx="368.5" cy="135.6" rx="1.7" ry="1.1" transform="rotate(25 368.5 135.6)"/><ellipse cx="374.9" cy="135.6" rx="1.7" ry="1.1" transform="rotate(-25 374.9 135.6)"/><ellipse cx="369.8" cy="129.8" rx="1.7" ry="1.1" transform="rotate(25 369.8 129.8)"/><ellipse cx="376.2" cy="129.8" rx="1.7" ry="1.1" transform="rotate(-25 376.2 129.8)"/><ellipse cx="356.6" cy="160.5" rx="1.7" ry="1.1" transform="rotate(25 356.6 160.5)"/><ellipse cx="363.0" cy="160.5" rx="1.7" ry="1.1" transform="rotate(-25 363.0 160.5)"/><ellipse cx="355.5" cy="156.1" rx="1.7" ry="1.1" transform="rotate(25 355.5 156.1)"/><ellipse cx="361.9" cy="156.1" rx="1.7" ry="1.1" transform="rotate(-25 361.9 156.1)"/><ellipse cx="354.3" cy="151.8" rx="1.7" ry="1.1" transform="rotate(25 354.3 151.8)"/><ellipse cx="360.7" cy="151.8" rx="1.7" ry="1.1" transform="rotate(-25 360.7 151.8)"/><ellipse cx="353.1" cy="147.5" rx="1.7" ry="1.1" transform="rotate(25 353.1 147.5)"/><ellipse cx="359.5" cy="147.5" rx="1.7" ry="1.1" transform="rotate(-25 359.5 147.5)"/><ellipse cx="352.0" cy="143.1" rx="1.7" ry="1.1" transform="rotate(25 352.0 143.1)"/><ellipse cx="358.4" cy="143.1" rx="1.7" ry="1.1" transform="rotate(-25 358.4 143.1)"/><ellipse cx="350.8" cy="138.8" rx="1.7" ry="1.1" transform="rotate(25 350.8 138.8)"/><ellipse cx="357.2" cy="138.8" rx="1.7" ry="1.1" transform="rotate(-25 357.2 138.8)"/></g>
<g stroke="#f2909e" stroke-width="1.5" fill="none" stroke-linecap="round"><path d="M377 143 Q372 139 375 132"/><path d="M397 142 Q402 140 401 134"/><path d="M375 150 Q369 152 368 158"/><path d="M375 154 Q370 157 370 163"/><path d="M377 158 Q373 162 374 167"/><path d="M399 148 Q407 148 411 155"/><path d="M399 152 Q406 154 408 162"/><path d="M397 156 Q402 160 402 167"/><path d="M393 160 Q396 165 394 171"/></g>
<ellipse cx="386.7" cy="150" rx="13.2" ry="11.3" fill="#f4919f" transform="rotate(12 386.7 150)"/><ellipse cx="385" cy="147" rx="8" ry="6" fill="#f8b4bd" opacity="0.6"/>
<path d="M372 133 Q374 127 380 128 Q377 130 378 134 Q375 136 372 133Z" fill="#f2909e"/><path d="M398 136 Q399 130 405 131 Q402 134 404 138 Q400 140 398 136Z" fill="#f2909e"/>
<g transform="translate(364 181.3) scale(1 1)"><path d="M-10.75 0 L-22.790000000000003 -13.6 Q-18.92 0 -22.790000000000003 13.6Z" fill="#f5c24c"/><path d="M-8.6 -11.2 L-2.58 -19.2 L5.375 -12.8Z" fill="#f0a94a"/><path d="M-6.45 11.2 L-1.075 18.4 L6.45 12.0Z" fill="#f5c24c"/><ellipse cx="0.645" cy="0" rx="17.2" ry="14.08" fill="#35486a"/><path d="M-6.45 -12.8 Q-0.43 -3.2 -6.0200000000000005 12.8 L1.29 13.76 Q6.45 1.6 0.86 -14.08Z" fill="#f5c24c"/><path d="M11.825000000000001 -9.92 Q15.479999999999999 0 11.825000000000001 9.92 Q18.275 4.8 21.5 0 Q18.275 -4.8 11.825000000000001 -9.92Z" fill="#f5c24c"/><path d="M-13.33 -8.0 Q-9.675 0 -13.33 8.0 L-16.125 4.0 L-16.125 -4.0Z" fill="#f5c24c"/><circle cx="10.32" cy="-1.92" r="1.5050000000000001" fill="#fff"/></g>
<ellipse cx="405" cy="170" rx="8" ry="6" fill="#f1a273"/><path d="M399 168q6 3 12 0M400 172q5 2 10 0" stroke="#d97f4e" stroke-width="0.6" fill="none"/>
<path d="M386.0 194.55 Q385.325 177.5 399.5 177.5 Q413.675 177.5 413.0 194.55 Q406.25 200.6 399.5 197.3 Q392.75 200.6 386.0 194.55Z" fill="#4a94d6"/><ellipse cx="397.475" cy="185.2" rx="8.1" ry="4.95" fill="#9ccdf0" opacity="0.55"/><path d="M389.4 195.1 q-1.4 11.4 0.8 21.0 t0.8 17.1 M391.1 195.1 q-1.3 9.3 0.8 17.0 t0.8 13.9 M392.8 195.1 q-1.3 12.0 0.9 22.0 t0.9 18.0 M394.4 195.1 q-1.3 9.9 1.0 18.1 t1.0 14.8 M396.1 195.1 q-1.3 11.0 1.0 20.2 t1.0 16.6 M397.8 195.1 q-1.3 11.6 1.1 21.2 t1.1 17.4 M399.5 195.1 q-1.3 9.0 1.2 16.5 t1.2 13.5 M401.2 195.1 q-1.2 12.0 1.3 21.9 t1.3 17.9 M402.9 195.1 q-1.2 10.1 1.3 18.5 t1.3 15.2 M404.6 195.1 q-1.2 10.9 1.4 19.9 t1.4 16.3 M406.2 195.1 q-1.2 11.7 1.5 21.4 t1.5 17.5 M407.9 195.1 q-1.2 8.7 1.6 16.0 t1.6 13.1 M409.6 195.1 q-1.2 11.9 1.7 21.8 t1.7 17.8" stroke="#3572b8" stroke-width="0.8" fill="none" opacity="0.7"/>
</g></svg><!--HE-->
</div>
<div id="status" class="abs" style="left:36px;top:425px;width:512px;height:9px;background:#696969;border-top:1px solid #5c5c5c;box-sizing:border-box;">
<div class="abs" style="left:1px;top:0;width:31px;height:8px;background:#c9c9c9;font-size:6px;line-height:9px;color:#222;text-align:center;">13.24%</div>
<div class="abs" style="left:33px;top:0;width:95px;height:8px;background:#c9c9c9;font-size:6px;line-height:8px;color:#222;text-align:center;">Doc: 57.2M/27.4M</div>
<div class="abs" style="left:128px;top:0;width:6px;height:8px;background:#e8e8e8;"><div class="abs" style="left:2px;top:2px;width:0;height:0;border-top:2.5px solid transparent;border-bottom:2.5px solid transparent;border-left:3px solid #111;"></div></div>
<div class="abs" style="left:137px;top:2px;font-size:4px;line-height:4px;color:#4c4c4c;">◀</div>
<div class="abs" style="left:504px;top:2px;font-size:4px;line-height:4px;color:#4c4c4c;">▶</div>
</div>
<div id="bottom" class="abs" style="left:36px;top:434px;width:519px;height:14px;background:#dadada;">
<div class="abs" style="left:1px;top:2px;width:107px;height:9px;border:1px solid #bdbdbd;background:#e6e6e6;border-radius:1px;font-size:6.5px;line-height:9px;color:#222;padding-left:3px;box-sizing:content-box;width:104px;">Show Open Files<div class="abs" style="right:5px;top:3.5px;width:0;height:0;border-left:2.5px solid transparent;border-right:2.5px solid transparent;border-top:3px solid #444;"></div></div>
<svg class="abs" style="left:486px;top:2px" width="30" height="10" viewBox="0 0 30 10"><path d="M1.5 3 L4.5 3 L3 5 Z" fill="#4a7fb5"/><path d="M5.5 2.5h5M5.5 4.5h5M5.5 6.5h5M5.5 8.5h5" stroke="#4a7fb5" stroke-width="1"/><path d="M19.5 4 L22 6.5 L24.5 4" stroke="#222" stroke-width="1.4" fill="none"/></svg>
</div>
<div class="abs" style="left:36px;top:448px;width:519px;height:2px;background:#4a4a4a;"></div>
<div class="abs" style="left:554px;top:434px;width:1px;height:16px;background:#5a5a5a;"></div><div class="abs" style="left:554px;top:35px;width:1px;height:14px;background:#8a8a8a;"></div>
<div class="abs" style="left:36px;top:49px;width:511px;height:1px;background:#5c5c5c;"></div>
<div id="tools" class="abs">
<!--TS--><div class="tl" style="top:0.0px">VIEW</div>
<div class="tg" style="top:11.0px;height:17.5px"></div>
<div class="tl" style="top:31.0px">SELECT</div>
<div class="tg" style="top:41.0px;height:37.0px"></div>
<div class="tl" style="top:80.5px">ENHANCE</div>
<div class="tg" style="top:90.5px;height:56.5px"></div>
<div class="tl" style="top:149.5px">DRAW</div>
<div class="tg" style="top:160.0px;height:75.0px"></div>
<div class="tl" style="top:237.0px">MODIFY</div>
<div class="tg" style="top:247.5px;height:37.0px"></div>
<div class="tl" style="top:287.2px">COLOR</div>
<div class="abs" style="left:0;top:42.5px;width:13.5px;height:17.5px;background:#b9b9b9;border-radius:0 1.5px 1.5px 0;"></div>
<svg class="abs" style="left:0;top:0" width="36" height="416" viewBox="0 34 36 416">
<circle cx="3" cy="54" r="3.8" fill="#f4f4f4" stroke="#333" stroke-width="1.3"/><path d="M6 57 L9.5 60.5" stroke="#333" stroke-width="1.8" stroke-linecap="round"/>
<path d="M19 56 L18 52.5 L19.5 52 L20.3 54 L20.5 50.3 L21.8 50.3 L22.2 53.5 L22.8 49.6 L24.2 49.8 L24.2 53.6 L25.4 50.6 L26.6 51 L26.2 54.8 L27.8 53.4 L28.6 54.2 L26.4 58 Q25.4 60.6 22.6 60.4 Q20.4 60.2 19 56Z" fill="#f6f6f6" stroke="#555" stroke-width="0.7" stroke-linejoin="round"/>
<g stroke="#333" stroke-width="0.9" fill="#333"><path d="M5.6 82.5v9M1.2 87h8.8" fill="none"/><path d="M5.6 81.2l-1.5 1.9h3zM5.6 92.8l-1.5-1.9h3zM-0.2 87l1.9-1.5v3zM11.4 87l-1.9-1.5v3z" stroke="none"/></g><path d="M0 82.3 L3 82.3 L1.5 83.8Z" fill="#333"/>
<rect x="17.8" y="82" width="11" height="9" fill="none" stroke="#333" stroke-width="1" stroke-dasharray="2 1.2"/>
<ellipse cx="5" cy="102.8" rx="5.2" ry="3" fill="none" stroke="#333" stroke-width="1.1" transform="rotate(-12 5 103)"/><path d="M1 105.5 Q-0.5 107 1.5 108.5" stroke="#333" stroke-width="1" fill="none"/>
<circle cx="20.5" cy="102.5" r="3" fill="none" stroke="#555" stroke-width="0.7" stroke-dasharray="1 0.8"/><path d="M21 103 L27.5 109.5" stroke="#444" stroke-width="1.5" stroke-linecap="round"/><circle cx="20.8" cy="102.8" r="1.1" fill="#3a80d0"/>
<path d="M-2 137 Q4 132.5 9.5 137 Q4 141.5 -2 137Z" fill="#f4f4f4" stroke="#444" stroke-width="0.8"/><circle cx="4" cy="137" r="2" fill="#c0392b"/><circle cx="4" cy="137" r="0.8" fill="#222"/><path d="M-1 134 Q4 131 8.5 133.5" stroke="#444" stroke-width="0.7" fill="none"/>
<path d="M19 130.5 L25 130 L18.5 138.5Z" fill="none" stroke="#666" stroke-width="0.6" stroke-dasharray="1 0.8"/><rect x="18" y="133.2" width="11.5" height="4" rx="1.2" fill="#e8a85a" stroke="#a86a28" stroke-width="0.6" transform="rotate(-42 23.5 135.5)"/>
<path d="M5.5 152 L9 148.2" stroke="#444" stroke-width="2" stroke-linecap="round"/><path d="M0 158.5 Q0 155 3 153 L6 155.5 Q5 159 1 160Z" fill="#3a8ad8"/><rect x="3" y="151.2" width="4" height="3" fill="#666" transform="rotate(40 5 152.7)"/>
<circle cx="23" cy="150" r="1.9" fill="#c87a3a"/><path d="M22 151 L24 151 L24.6 155 L21.4 155Z" fill="#c87a3a"/><rect x="18.6" y="155" width="8.8" height="2.6" rx="0.6" fill="#b86a2a"/><rect x="18.6" y="158" width="8.8" height="1" fill="#7a4a20"/>
<path d="M3.6 168.5 Q7.6 174 7.4 176 Q7 179.2 3.6 179.2 Q0.2 179.2 -0.2 176 Q-0.4 174 3.6 168.5Z" fill="#3a8ad8"/><path d="M2 175 Q2 177.5 4 178" stroke="#9cc8f0" stroke-width="0.7" fill="none"/>
<ellipse cx="23" cy="173.6" rx="5.6" ry="4.4" fill="#e8a85a" stroke="#b87a38" stroke-width="0.6"/><path d="M19 175 Q23 178.5 27.5 175" stroke="#a86a28" stroke-width="0.8" fill="none"/><circle cx="21" cy="172" r="0.6" fill="#b87a38"/><circle cx="24" cy="171.5" r="0.6" fill="#b87a38"/><circle cx="25.5" cy="174" r="0.6" fill="#b87a38"/>
<path d="M3.5 205 L9.5 198.5" stroke="#444" stroke-width="1.5" stroke-linecap="round"/><path d="M-1 208.5 Q0 205.5 2.6 204.4 L4.2 206 Q3 209 -1 208.5Z" fill="#3a8ad8"/>
<path d="M17.5 206.5 L25.5 200.5 L29.5 202.2 L21.5 208.6Z" fill="#f08a98" stroke="#b84a58" stroke-width="0.5"/><path d="M17.5 206.5 L21.5 208.6 L21.5 210.4 L17.5 208.4Z" fill="#f6c0c8" stroke="#b84a58" stroke-width="0.4"/><path d="M21.5 208.6 L29.5 202.2 L29.5 204 L21.5 210.4Z" fill="#d86a78"/>
<path d="M-1 221 L5 219.5 L6.5 225.5 L0.5 228Z" fill="#8a8a8a" stroke="#444" stroke-width="0.7"/><path d="M1 220 Q2 215.5 4 219" stroke="#444" stroke-width="0.8" fill="none"/><path d="M6 222.5 Q8.8 222.5 8.6 227.5 Q7.6 228 7 226 Z" fill="#3a8ad8"/>
<defs><linearGradient id="gd" x1="0" x2="1"><stop offset="0" stop-color="#111"/><stop offset="1" stop-color="#f4f4f4"/></linearGradient></defs><rect x="17.8" y="219.2" width="11" height="8.8" fill="url(#gd)" stroke="#333" stroke-width="0.7"/>
<path d="M0.5 246 L6 240" stroke="#555" stroke-width="1.4" stroke-linecap="round"/><path d="M5 238.8 L7.2 241" stroke="#333" stroke-width="1.2"/><path d="M6 239.8 L8.2 237.2" stroke="#a04a3a" stroke-width="2.2" stroke-linecap="round"/>
<rect x="17.6" y="238" width="11.4" height="9" fill="#3a8ee0"/><path d="M19 243.5 q1.2 -1.5 2.4 0 t2.4 0 t2.4 0 t1.6 0" stroke="#2a6ab8" stroke-width="0.6" fill="none"/>
<path d="M19 266 L20 263 L26 256.8 L28.4 259 L22.2 265.2Z" fill="#6a6a6a"/><path d="M19 266 L20 263 L22.2 265.2Z" fill="#e8b070"/><path d="M26 256.8 L27 255.8 Q28.6 255.4 29.4 257.8 L28.4 259Z" fill="#e86a78"/>
<path d="M1.5 287 V295.5 H10 M-1 289.5 H7.5 V298" stroke="#333" stroke-width="1.3" fill="none"/>
<rect x="17" y="287.5" width="9" height="9" fill="none" stroke="#333" stroke-width="0.8" stroke-dasharray="1.6 1"/><circle cx="26" cy="294" r="2.8" fill="#5a9a30"/><circle cx="26" cy="294" r="1" fill="#e8f0d8"/>
<path d="M-1 307.5 Q3 307.5 5 311 Q7 314.5 10 314.5 M-1 314.5 Q3 314.5 5 311 Q7 307.5 10 307.5" stroke="#333" stroke-width="1.1" fill="none"/><path d="M9 306 L11 307.5 L9 309Z M9 313 L11 314.5 L9 316Z" fill="#333"/>
<rect x="16.8" y="310" width="12" height="4.4" fill="#5a9a30" stroke="#3a7a18" stroke-width="0.5"/><rect x="20.6" y="311" width="4.4" height="2.2" fill="#e8f0c8"/><path d="M18.5 309 Q22.8 303.5 27.2 309" stroke="#666" stroke-width="0.6" stroke-dasharray="0.8 0.8" fill="none"/>
<rect x="9.6" y="344.6" width="16.8" height="16.4" fill="#fff" stroke="#9a9a9a" stroke-width="0.6"/><rect x="1.8" y="336" width="16.4" height="16.2" fill="#27b0c2"/><path d="M2 336.4 H18" stroke="#7ad0dc" stroke-width="0.6" stroke-dasharray="1 1"/>
<path d="M20.5 337.5 Q23.5 337 23.8 340.5" stroke="#333" stroke-width="0.8" fill="none"/><path d="M19.3 337.6 L21.3 336 L21.3 339.2Z M22.4 339.8 L25.2 339.8 L23.8 341.8Z" fill="#333"/>
<rect x="3.6" y="357" width="4" height="4" fill="#fff" stroke="#666" stroke-width="0.5"/><rect x="1.6" y="355" width="4" height="4" fill="#111"/>
</svg>
<div class="abs" style="left:-0.5px;top:220.5px;font-family:'Liberation Serif',serif;font-weight:bold;font-size:13.5px;line-height:14px;color:#5a9a30;">T</div><!--TE-->
</div>
<div id="right" class="abs">
<div class="abs" style="left:0;top:0;width:125px;height:15px;background:#dcdcdc;"></div>
<svg class="abs" style="left:0;top:0" width="125" height="15" viewBox="555 34 125 15">
<path d="M560.4 38.3 H567.6 V45.4 H562.8 L560.4 43Z" fill="#f6f8fb" stroke="#1d4c8c" stroke-width="0.9"/><path d="M560.4 43 H562.8 V45.4" fill="none" stroke="#1d4c8c" stroke-width="0.7"/><path d="M562 40 H566 V43.6" fill="none" stroke="#8fb0d8" stroke-width="0.8"/>
<circle cx="578" cy="41.6" r="4.3" fill="#f6f8fb" stroke="#1d4c8c" stroke-width="1"/><path d="M574.9 44.7 A4.3 4.3 0 0 1 581.1 38.5Z" fill="#2a6ab0"/><path d="M581.5 45 h3.4 l-1.7 2z" fill="#333"/>
<rect x="589.6" y="37.8" width="8.2" height="7.8" fill="#8fb6dc"/><circle cx="593.7" cy="41.7" r="2.6" fill="#c8dcf0"/>
<rect x="604.8" y="41" width="7" height="5" rx="0.6" fill="#8fb6dc"/><path d="M606.4 41 v-1.6 a1.9 1.9 0 0 1 3.8 0 v1.6" fill="none" stroke="#8fb6dc" stroke-width="1.1"/>
<rect x="619.4" y="38" width="5.6" height="5.6" fill="#c2d6ea"/><path d="M619.4 38 l5.6 5.6 M625 38 l-5.6 5.6" stroke="#e4ecf4" stroke-width="0.8"/><rect x="624.4" y="42.6" width="3.6" height="3.2" fill="#9fc0e0"/><path d="M625.2 42.6 v-1 a1 1 0 0 1 2 0 v1" fill="none" stroke="#9fc0e0" stroke-width="0.7"/>
<path d="M666.6 39.4 h7 M668.6 39.2 v-1 h3 v1" stroke="#8fb6dc" stroke-width="1" fill="none"/><path d="M667.3 40.6 h5.6 l-0.5 5.6 h-4.6z" fill="#a8c8e6"/><path d="M669 41.6v3.6M671.2 41.6v3.6" stroke="#e4eef8" stroke-width="0.6"/>
</svg>
<div class="abs" style="left:2px;top:18px;width:64px;height:9px;border:1px solid #c2c2c2;background:#e2e2e2;font-size:6px;line-height:9px;color:#444;padding-left:4px;box-sizing:content-box;width:60px;">Normal<div class="abs" style="right:4px;top:4px;width:0;height:0;border-left:2px solid transparent;border-right:2px solid transparent;border-top:2.5px solid #808080;"></div></div>
<div class="abs" style="left:80px;top:18px;font-size:6.5px;line-height:11px;color:#444;">Opacity:</div>
<div class="abs" style="left:108px;top:17px;width:20px;height:10px;border:1px solid #999;background:#e4e4e4;font-size:6px;line-height:11px;color:#444;padding-left:2px;">100%</div>
<div class="abs" style="left:0;top:31px;width:125px;height:34px;background:linear-gradient(#6b9bd7,#5686c7);">
<svg class="abs" style="left:2px;top:11px" width="20" height="12" viewBox="0 0 20 12"><ellipse cx="4.5" cy="5.5" rx="3.2" ry="2.1" fill="#dfe8f4"/><ellipse cx="4.5" cy="5.5" rx="1.5" ry="1" fill="#8a9ab0"/><path d="M15.5 2.5v5a1.2 1.2 0 0 1-2.4 0v-3" stroke="#8fb0da" stroke-width="0.8" fill="none"/></svg>
<div class="abs" style="left:29px;top:1px;width:24px;height:30px;background:#fff;border:1px solid #2a3a55;"><svg class="abs" style="left:0;top:0" width="24" height="30" viewBox="145 55 293 365"><use href="#hg"/></svg></div>
<div class="abs" style="left:62px;top:11px;font-size:6.6px;line-height:10px;color:#eef3fa;">Background</div>
<svg class="abs" style="left:117px;top:11px" width="8" height="12" viewBox="0 0 8 12"><rect x="1.6" y="1.6" width="7" height="8" fill="#cfdff2"/><path d="M2.6 3l3 4.5M5.8 3l-2.6 4.5" stroke="#3c78be" stroke-width="0.9"/></svg>
</div>
</div>
<div id="dialog" class="abs">
<div class="abs" style="left:0;top:0;width:203px;height:10px;background:linear-gradient(#e6e6e6,#bebebe);border-bottom:1px solid #9a9a9a;"></div>
<div class="dt" style="left:6.0px;top:-0.2px;font-size:6.5px;">Image Size</div>
<svg class="abs" style="left:194.5px;top:1.0px;" width="7" height="7" viewBox="0 0 7 7"><path d="M1 1l5 5M6 1l-5 5" stroke="#111" stroke-width="1.3"/></svg>
<div class="abs" style="left:4.8px;top:16.3px;width:8px;height:8px;border-radius:50%;background:#4a4a4a;color:#eee;font-size:6px;font-weight:bold;line-height:8px;text-align:center;">?</div>
<div class="dt" style="left:16.0px;top:15.3px;">Learn more about: <span style="color:#2d8fd6">Image Size</span></div>
<div class="btn" style="left:159.5px;top:15.7px;">OK</div>
<div class="btn" style="left:159.5px;top:33.3px;">Cancel</div>
<div class="btn" style="left:159.5px;top:55.2px;"><u>H</u>elp</div>
<div class="abs" style="left:5.5px;top:46.8px;width:142px;height:44px;border:1px solid #c4c4c4;box-shadow:1px 1px 0 #f2f2f2, inset 1px 1px 0 #f2f2f2;"></div>
<div class="dt" style="left:13.0px;top:41.8px;background:#dcdcdc;padding:0 3px 0 2px;">Pixel Dimensions:&nbsp; 57.2M</div>
<div class="dt" style="left:2.0px;top:59.2px;width:41px;text-align:right;">Width:</div>
<div class="inp" style="left:45.5px;top:58.2px;">4000</div>
<div class="sel" style="left:82.5px;top:58.2px;width:31px;">pixels<i></i></div>
<div class="dt" style="left:2.0px;top:76.8px;width:41px;text-align:right;">Height:</div>
<div class="inp" style="left:45.5px;top:75.8px;">5000</div>
<div class="sel" style="left:82.5px;top:75.8px;width:31px;">pixels<i></i></div>
<div class="abs" style="left:5.0px;top:103.0px;width:144px;height:63px;border:1px solid #5c5c5c;box-shadow:inset 1px 1px 0 #f0f0f0, 1px 1px 0 #f0f0f0;"></div>
<div class="dt" style="left:13.0px;top:98.0px;background:#dcdcdc;padding:0 5px 0 3px;">Document Size:</div>
<div class="dt" style="left:2.0px;top:115.5px;width:41px;text-align:right;">Width:</div>
<div class="inp" style="left:45.5px;top:114.5px;">8</div>
<div class="sel" style="left:82.5px;top:114.5px;width:40px;">inches<i></i></div>
<div class="dt" style="left:2.0px;top:133.0px;width:41px;text-align:right;">Height:</div>
<div class="inp" style="left:45.5px;top:132.0px;">10</div>
<div class="sel" style="left:82.5px;top:132.0px;width:40px;">inches<i></i></div>
<div class="dt" style="left:2.0px;top:150.8px;width:41px;text-align:right;">Resolution:</div>
<div class="inp" style="left:45.5px;top:149.8px;">500</div>
<div class="sel" style="left:82.5px;top:149.8px;width:40px;">pixels/in...<i></i></div>
<div class="cb" style="left:5.5px;top:172.0px;border-color:#aaa;"></div>
<div class="dt" style="left:14.5px;top:170.5px;color:#8a8a8a;">Scale St<u>y</u>les</div>
<div class="cb" style="left:5.5px;top:183.0px;"></div>
<div class="dt" style="left:14.5px;top:181.5px;"><u>C</u>onstrain Proportions</div>
<div class="cb" style="left:5.5px;top:194.0px;"></div>
<svg class="abs" style="left:5.6px;top:192.6px;" width="8" height="8" viewBox="0 0 8 8"><path d="M1.3 4.2l1.8 2.2L6.8 1" stroke="#111" stroke-width="1.3" fill="none"/></svg>
<div class="dt" style="left:14.5px;top:192.5px;">Resample <u>I</u>mage:</div>
<div class="sel" style="left:18.5px;top:205.5px;width:126px;">Bicubic (best for smooth gradients)<i style="right:6px"></i></div>
</div>
</body>
</html>
